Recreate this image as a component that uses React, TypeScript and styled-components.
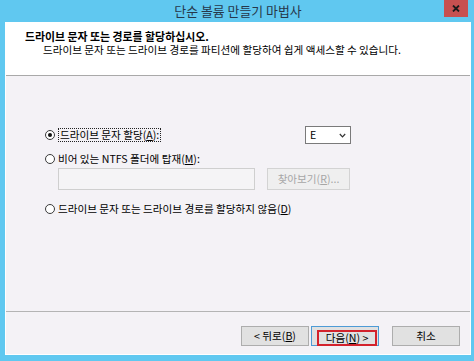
import React from 'react';
import styled, { createGlobalStyle } from 'styled-components';

const GlobalStyle = createGlobalStyle`
  html, body {
    margin: 0;
    padding: 0;
    background: #60c8f0;
  }
  * {
    box-sizing: border-box;
  }
`;

const Frame = styled.div`
  width: 474px;
  height: 361px;
  background: #60c8f0;
  padding: 0 3px 6px 5px;
  display: flex;
  flex-direction: column;
  font-family: "Noto Sans CJK KR", "Noto Sans", sans-serif;
  font-size: 10.6px;
  color: #000;
`;

const TitleBar = styled.div`
  height: 22px;
  flex: none;
  display: grid;
  grid-template-columns: 1fr auto 1fr;
  align-items: start;
`;

const Title = styled.div`
  grid-column: 2;
  line-height: 22px;
  font-size: 12.9px;
  color: #26374a;
`;

const CloseButton = styled.div`
  grid-column: 3;
  justify-self: end;
  margin-right: 3px;
  width: 24px;
  height: 17px;
  background: #c75050;
  display: flex;
  align-items: center;
  justify-content: center;
`;

const Client = styled.div`
  flex: 1;
  display: flex;
  flex-direction: column;
  background: #f4f2f6;
  border: 1px solid #ffffff;
  border-top: none;
`;

const Header = styled.div`
  height: 54px;
  flex: none;
  background: #ffffff;
  border-bottom: 1px solid #a9a9a9;
  padding: 7px 0 0 19px;
  line-height: 14px;
`;

const HeaderTitle = styled.div`
  font-weight: 700;
  font-size: 10.9px;
`;

const HeaderSub = styled.div`
  padding-left: 18px;
`;

const Body = styled.div`
  flex: 1;
  padding: 50px 0 0 39px;
  display: flex;
  flex-direction: column;
`;

const OptionRow = styled.div<{ $height: number; $top: number }>`
  height: ${({ $height }) => $height}px;
  margin-top: ${({ $top }) => $top}px;
  width: 306px;
  display: flex;
  align-items: center;
  justify-content: space-between;
`;

const RadioLabel = styled.label`
  display: flex;
  align-items: center;
  gap: 3px;
  line-height: 14px;
  white-space: nowrap;
`;

const Radio = styled.span<{ $checked?: boolean }>`
  width: 10px;
  height: 10px;
  border-radius: 50%;
  border: 1px solid #3a3a3a;
  background: #fff;
  display: flex;
  align-items: center;
  justify-content: center;
  &::after {
    content: '';
    width: 4px;
    height: 4px;
    border-radius: 50%;
    background: ${({ $checked }) => ($checked ? '#111' : 'transparent')};
  }
`;

const FocusText = styled.span`
  border: 1px dotted #222;
  padding: 0 1px;
  line-height: 12px;
`;

const Dropdown = styled.div`
  width: 46px;
  height: 18px;
  border: 1px solid #7a7a7a;
  background: #fff;
  display: flex;
  align-items: center;
  justify-content: space-between;
  padding: 0 4px 0 4px;
  line-height: 16px;
`;

const InputRow = styled.div`
  margin-top: 2px;
  padding-left: 13px;
  display: flex;
  gap: 12px;
`;

const PathInput = styled.div`
  width: 197px;
  height: 22px;
  border: 1px solid #cfcfcf;
  background: #f5f4f6;
`;

const BrowseButton = styled.div`
  width: 83px;
  height: 22px;
  border: 1px solid #d3d3d3;
  background: #efefef;
  color: #a6a6a6;
  display: flex;
  align-items: center;
  justify-content: center;
  line-height: 14px;
`;

const Footer = styled.div`
  flex: none;
  height: 43px;
  border-top: 1px solid #b4b4b4;
  padding: 14px 10px 0 0;
  display: flex;
  justify-content: flex-end;
  align-items: flex-start;
`;

const Button = styled.div<{ $gapLeft?: number; $default?: boolean }>`
  width: 68px;
  height: 20px;
  margin-left: ${({ $gapLeft }) => $gapLeft || 0}px;
  border: 1px solid ${({ $default }) => ($default ? '#4d9bd6' : '#adadad')};
  background: #e1e1e1;
  display: flex;
  align-items: center;
  justify-content: center;
  line-height: 14px;
  white-space: nowrap;
`;

const Highlight = styled.span`
  align-self: stretch;
  flex: 1;
  margin: 3px 1px -1px 5px;
  border: 2px solid #d3222c;
  display: flex;
  align-items: center;
  justify-content: center;
`;

const App: React.FC = () => {
  return (
    <>
      <GlobalStyle />
      <Frame>
        <TitleBar>
          <Title>단순 볼륨 만들기 마법사</Title>
          <CloseButton>
            <svg width="8" height="7" viewBox="0 0 8 7">
              <path d="M1 0.5 L7 6.5 M7 0.5 L1 6.5" stroke="#1b1b1b" strokeWidth="1.8" />
            </svg>
          </CloseButton>
        </TitleBar>
        <Client>
          <Header>
            <HeaderTitle>드라이브 문자 또는 경로를 할당하십시오.</HeaderTitle>
            <HeaderSub>드라이브 문자 또는 드라이브 경로를 파티션에 할당하여 쉽게 액세스할 수 있습니다.</HeaderSub>
          </Header>
          <Body>
            <OptionRow $height={18} $top={0}>
              <RadioLabel>
                <Radio $checked />
                <FocusText>
                  드라이브 문자 할당(<u>A</u>):
                </FocusText>
              </RadioLabel>
              <Dropdown>
                <span>E</span>
                <svg width="7" height="5" viewBox="0 0 7 5">
                  <path d="M0.8 1 L3.5 3.8 L6.2 1" stroke="#333" strokeWidth="1.2" fill="none" />
                </svg>
              </Dropdown>
            </OptionRow>
            <OptionRow $height={14} $top={8}>
              <RadioLabel>
                <Radio />
                <span>
                  비어 있는 NTFS 폴더에 탑재(<u>M</u>):
                </span>
              </RadioLabel>
            </OptionRow>
            <InputRow>
              <PathInput />
              <BrowseButton>
                찾아보기(<u>R</u>)...
              </BrowseButton>
            </InputRow>
            <OptionRow $height={14} $top={12}>
              <RadioLabel>
                <Radio />
                <span>
                  드라이브 문자 또는 드라이브 경로를 할당하지 않음(<u>D</u>)
                </span>
              </RadioLabel>
            </OptionRow>
          </Body>
          <Footer>
            <Button>
              &lt; 뒤로(<u>B</u>)
            </Button>
            <Button $gapLeft={2} $default>
              <Highlight>
                다음(<u>N</u>) &gt;
              </Highlight>
            </Button>
            <Button $gapLeft={13}>취소</Button>
          </Footer>
        </Client>
      </Frame>
    </>
  );
};

export default App;
